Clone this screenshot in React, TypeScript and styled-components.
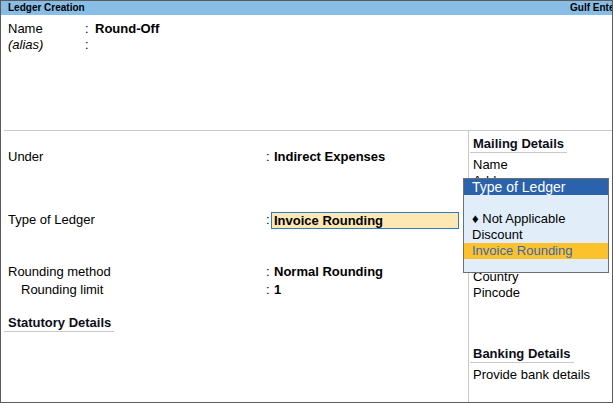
import React from 'react'
import styled, { createGlobalStyle } from 'styled-components'

const GlobalStyle = createGlobalStyle`
  html, body {
    margin: 0;
    padding: 0;
    background: #fff;
  }
  body {
    font-family: 'Liberation Sans', Arial, sans-serif;
    color: #000;
  }
`

const Frame = styled.div`
  position: relative;
  width: 613px;
  height: 403px;
  box-sizing: border-box;
  border: 1px solid #5b5b5b;
  display: flex;
  flex-direction: column;
  overflow: hidden;
  background: #fff;
`

const TitleBar = styled.div`
  height: 14px;
  flex: 0 0 auto;
  background: #88bde6;
  display: flex;
  align-items: center;
  padding-left: 7px;
  font-size: 10px;
  font-weight: bold;
  line-height: 14px;
  overflow: hidden;
  white-space: nowrap;
`

const Title = styled.div`
  flex: 1;
`

const Company = styled.div`
  flex: 0 0 42px;
  width: 42px;
  min-width: 0;
  white-space: nowrap;
`

const NameBlock = styled.div`
  height: 115px;
  flex: 0 0 auto;
  padding: 6px 0 0 7px;
  box-sizing: border-box;
  font-size: 13px;
`

const NameRow = styled.div`
  display: grid;
  grid-template-columns: 77px 10px auto;
  line-height: 16px;
  height: 16px;
`

const Alias = styled.span`
  font-style: italic;
`

const Strong = styled.span`
  font-weight: bold;
`

const Body = styled.div`
  flex: 1;
  display: flex;
  margin-left: 3px;
  border-top: 1px solid #c8c8c8;
  min-height: 0;
`

const LeftPane = styled.div`
  width: 464px;
  flex: 0 0 auto;
  padding: 17px 0 0 4px;
  box-sizing: border-box;
  font-size: 13px;
  display: flex;
  flex-direction: column;
  align-items: stretch;
`

const FieldRow = styled.div<{ $gap?: number; $indent?: boolean }>`
  display: grid;
  grid-template-columns: ${({ $indent }) => ($indent ? '245px' : '258px')} 5px auto;
  padding-left: ${({ $indent }) => ($indent ? '13px' : '0')};
  margin-top: ${({ $gap }) => $gap ?? 0}px;
  height: 18px;
  line-height: 18px;
  align-items: center;
`

const Colon = styled.span`
  line-height: 18px;
`

const Value = styled.span`
  font-weight: bold;
  padding-left: 3px;
`

const InputBox = styled.div`
  width: 188px;
  height: 17px;
  box-sizing: border-box;
  border: 1px solid #2b7cc4;
  background: #fde7b2;
  font-weight: bold;
  padding-left: 2px;
  line-height: 15px;
`

const SectionTitle = styled.div<{ $gap?: number; $shift?: number }>`
  align-self: flex-start;
  font-size: 13px;
  font-weight: bold;
  line-height: 16px;
  color: #0d0d1a;
  padding: 0 3px 0 ${({ $shift }) => ($shift ? 4 : 3)}px;
  margin-left: ${({ $shift }) => -($shift ?? 0)}px;
  border-bottom: 1px solid #c8c8c8;
  margin-top: ${({ $gap }) => $gap ?? 0}px;
`

const RightPane = styled.div`
  flex: 1;
  border-left: 1px solid #c8c8c8;
  padding: 5px 0 0 1px;
  display: flex;
  flex-direction: column;
  align-items: flex-start;
  font-size: 13px;
`

const InfoList = styled.div`
  margin-top: 4px;
  padding-left: 3px;
`

const InfoLine = styled.div`
  height: 16px;
  line-height: 16px;
  white-space: nowrap;
`

const Popup = styled.div`
  position: absolute;
  left: 462px;
  top: 177px;
  width: 146px;
  box-sizing: border-box;
  border: 1px solid #6e6e6e;
  background: #e1eefa;
  padding-bottom: 13px;
`

const PopupHeader = styled.div`
  height: 16px;
  line-height: 16px;
  background: #2a62ae;
  color: #fff;
  font-size: 14px;
  padding-left: 8px;
`

const PopupList = styled.div`
  padding-top: 16px;
`

const PopupItem = styled.div<{ $active?: boolean }>`
  height: 16px;
  line-height: 16px;
  font-size: 13px;
  padding-left: 8px;
  background: ${({ $active }) => ($active ? '#fbc22e' : 'transparent')};
  color: ${({ $active }) => ($active ? '#3a68b0' : '#000')};
  white-space: nowrap;
`

const mailing = ['Name', 'Address', '', '', '', '', 'State', 'Country', 'Pincode']

const ledgerTypes = ['\u2666 Not Applicable', 'Discount', 'Invoice Rounding']

export default function App() {
  return (
    <>
      <GlobalStyle />
      <Frame>
        <TitleBar>
          <Title>Ledger Creation</Title>
          <Company>Gulf Enterprises</Company>
        </TitleBar>
        <NameBlock>
          <NameRow>
            <span>Name</span>
            <span>:</span>
            <Strong>Round-Off</Strong>
          </NameRow>
          <NameRow>
            <Alias>(alias)</Alias>
            <span>:</span>
            <span />
          </NameRow>
        </NameBlock>
        <Body>
          <LeftPane>
            <FieldRow>
              <span>Under</span>
              <Colon>:</Colon>
              <Value>Indirect Expenses</Value>
            </FieldRow>
            <FieldRow $gap={45}>
              <span>Type of Ledger</span>
              <Colon>:</Colon>
              <InputBox>Invoice Rounding</InputBox>
            </FieldRow>
            <FieldRow $gap={34}>
              <span>Rounding method</span>
              <Colon>:</Colon>
              <Value>Normal Rounding</Value>
            </FieldRow>
            <FieldRow $indent>
              <span>Rounding limit</span>
              <Colon>:</Colon>
              <Value>1</Value>
            </FieldRow>
            <SectionTitle $gap={16} $shift={4}>
              Statutory Details
            </SectionTitle>
          </LeftPane>
          <RightPane>
            <SectionTitle>Mailing Details</SectionTitle>
            <InfoList>
              {mailing.map((m, i) => (
                <InfoLine key={i}>{m}</InfoLine>
              ))}
            </InfoList>
            <SectionTitle $gap={45}>Banking Details</SectionTitle>
            <InfoList>
              <InfoLine>Provide bank details</InfoLine>
            </InfoList>
          </RightPane>
        </Body>
        <Popup>
          <PopupHeader>Type of Ledger</PopupHeader>
          <PopupList>
            {ledgerTypes.map((t) => (
              <PopupItem key={t} $active={t === 'Invoice Rounding'}>
                {t}
              </PopupItem>
            ))}
          </PopupList>
        </Popup>
      </Frame>
    </>
  )
}
